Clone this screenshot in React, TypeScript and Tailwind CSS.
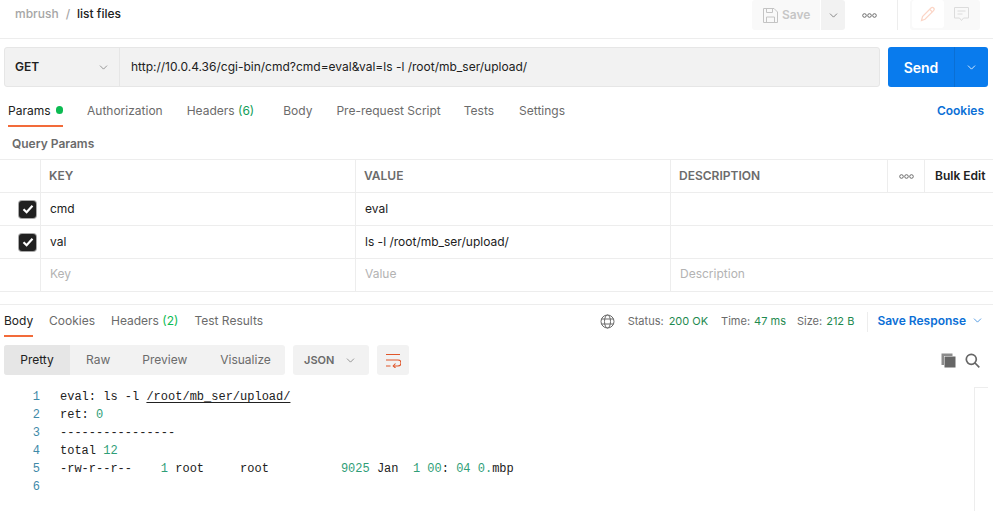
import { ChevronDown } from 'lucide-react';

const inter = "font-['Inter','Noto_Sans',sans-serif]";

function Dots({ className = '' }: { className?: string }) {
  return (
    <svg width="15" height="5" viewBox="0 0 15 5" className={className} fill="none" stroke="#6b6b6b" strokeWidth="1">
      <circle cx="2.5" cy="2.5" r="1.8" />
      <circle cx="7.5" cy="2.5" r="1.8" />
      <circle cx="12.5" cy="2.5" r="1.8" />
    </svg>
  );
}

function Num({ children }: { children: string }) {
  return <span className="text-[#2f9e77]">{children}</span>;
}

function Check() {
  return (
    <div className="flex h-[17px] w-[17px] items-center justify-center rounded-[3px] bg-[#212121] ring-1 ring-[#a8a8a8]">
      <svg width="12" height="10" viewBox="0 0 12 10" fill="none" stroke="#fff" strokeWidth="2.2">
        <path d="M1.5 5.2 4.6 8.2 10.5 1.8" />
      </svg>
    </div>
  );
}

function Row({ k, v, d, muted, check }: { k: string; v: string; d?: string; muted?: boolean; check?: boolean }) {
  const text = muted ? 'pb-[2px] text-[#b3b3b3]' : 'text-[#212121]';
  return (
    <div className="flex h-[33px] border-b border-[#ededed] text-[12px]">
      <div className="flex w-[41px] shrink-0 items-center justify-end border-r border-[#ededed] pr-[4px]">
        {check && <Check />}
      </div>
      <div className={`flex w-[315px] shrink-0 items-center border-r border-[#ededed] pl-[9px] ${text}`}>{k}</div>
      <div className={`flex w-[315px] shrink-0 items-center border-r border-[#ededed] pl-[9px] ${text}`}>{v}</div>
      <div className={`flex flex-1 items-center pl-[9px] ${text}`}>{d}</div>
    </div>
  );
}

const codeLines = [
  <>
    eval: ls -l <span className="underline underline-offset-2">/root/mb_ser/upload/</span>
  </>,
  <>
    ret: <Num>0</Num>
  </>,
  <>----------------</>,
  <>
    total <Num>12</Num>
  </>,
  <>
    -rw-r--r-- {'   '}
    <Num>1</Num> root{'     '}root{'          '}
    <Num>9025</Num> Jan{'  '}
    <Num>1</Num> <Num>00</Num>: <Num>04</Num> <Num>0.</Num>mbp
  </>,
  <></>,
];

export default function App() {
  return (
    <div className={`h-[511px] w-[993px] overflow-hidden bg-white ${inter}`}>
      {/* Top bar */}
      <div className="flex h-[39px] items-start justify-between border-b border-[#ededed] pl-[15px]">
        <div className="flex h-[28px] items-center text-[12px] font-medium">
          <span className="text-[#a6a6a6]">mbrush</span>
          <span className="ml-[7px] text-[#a6a6a6]">/</span>
          <span className="ml-[7px] text-[#212121]">list files</span>
        </div>
        <div className="flex h-[30px] items-center pr-[13px]">
          <div className="flex h-[30px] w-[68px] items-center gap-[4px] rounded-l-[3px] bg-[#f9f9f9] pl-[11px] text-[12px] font-semibold text-[#c6c6c6]">
            <svg width="15" height="15" viewBox="0 0 15 15" fill="none" stroke="#c4c4c4" strokeWidth="1">
              <path d="M0.5 0.5h10.5l3.5 3.5v10.500H0.500z" />
              <path d="M3.500 0.500v4h6v-4M3.500 14.500v-5.500h8v5.500" />
            </svg>
            Save
          </div>
          <div className="ml-px flex h-[30px] w-[24px] items-center justify-center rounded-r-[3px] bg-[#f2f2f2]">
            <ChevronDown size={13} strokeWidth={1.25} color="#555" />
          </div>
          <Dots className="ml-[17px]" />
          <div className="ml-[20px] h-[30px] w-px bg-[#ededed]" />
          <div className="ml-[12px] flex h-[30px] w-[70px] rounded-[3px] bg-[#f9f9f9] pl-[2px]">
            <div className="flex h-[28px] w-[32px] items-center justify-center rounded-[3px] bg-white">
              <svg width="16" height="16" viewBox="0 0 16 16" fill="none" stroke="#fbd5c6" strokeWidth="1.2">
                <path d="M1.500 14.500 2.500 10.500 11 2a1.600 1.600 0 0 1 2.600 2.600L5 13.200z" />
                <path d="M9.800 3.400 12.400 6" />
              </svg>
            </div>
            <div className="flex h-[28px] w-[34px] items-center justify-center">
              <svg width="15" height="15" viewBox="0 0 15 15" fill="none" stroke="#dcdcdc" strokeWidth="1">
                <path d="M0.500 0.500h14v10.500H9.500L7.500 13.500 5.500 11H0.500z" />
                <path d="M3.500 4h8M3.500 7h5" />
              </svg>
            </div>
          </div>
        </div>
      </div>

      {/* Url row */}
      <div className="mt-[8px] flex h-[40px] pl-[4px] pr-[5px] text-[12px]">
        <div className="flex w-[876px] rounded-[3px] border border-[#e6e6e6] bg-[#f2f2f2]">
          <div className="flex w-[115px] items-center justify-between border-r border-[#e6e6e6] pl-[10px] pr-[9px] font-semibold text-[#212121]">
            GET
            <ChevronDown size={13} strokeWidth={1.25} color="#6b6b6b" />
          </div>
          <div className="flex flex-1 items-center pl-[11px] text-[#212121]">
            http://10.0.4.36/cgi-bin/cmd?cmd=eval&amp;val=ls -l /root/mb_ser/upload/
          </div>
        </div>
        <div className="ml-[8px] flex flex-1 rounded-[3px] bg-[#097bed] text-white">
          <div className="flex w-[67px] items-center justify-center border-r border-[#0a6fd4] text-[14px] font-semibold">Send</div>
          <div className="flex flex-1 items-center justify-center">
            <ChevronDown size={13} strokeWidth={1.5} color="#fff" />
          </div>
        </div>
      </div>

      {/* Request tabs */}
      <div className="mt-[15px] flex h-[25px] items-start justify-between pl-[8px] pr-[9px] text-[12px] text-[#6b6b6b]">
        <div className="flex">
          <div className="flex h-[25px] w-[55px] items-start gap-[5px] border-b-2 border-[#f26b3a] text-[#212121]">
            Params
            <span className="mt-[4px] h-[8px] w-[8px] rounded-full bg-[#0cbb52]" />
          </div>
          <span className="ml-[24px]">Authorization</span>
          <span className="ml-[24px]">
            Headers <span className="text-[#0f9d58]">(6)</span>
          </span>
          <span className="ml-[29px]">Body</span>
          <span className="ml-[24px]">Pre-request Script</span>
          <span className="ml-[23px]">Tests</span>
          <span className="ml-[25px]">Settings</span>
        </div>
        <span className="font-semibold text-[#0b6fd6]">Cookies</span>
      </div>

      <div className="flex h-[32px] items-center pl-[12px] pt-[2px] text-[12px] font-semibold text-[#6b6b6b]">Query Params</div>

      {/* Params table */}
      <div className="border-t border-[#ededed]">
        <div className="flex h-[33px] border-b border-[#ededed] text-[12px] font-semibold text-[#6b6b6b]">
          <div className="w-[41px] shrink-0 border-r border-[#ededed]" />
          <div className="flex w-[315px] shrink-0 items-center border-r border-[#ededed] pl-[8px]">KEY</div>
          <div className="flex w-[315px] shrink-0 items-center border-r border-[#ededed] pl-[8px]">VALUE</div>
          <div className="flex w-[217px] shrink-0 items-center border-r border-[#ededed] pl-[8px]">DESCRIPTION</div>
          <div className="flex w-[37px] shrink-0 items-center justify-center border-r border-[#ededed]">
            <Dots />
          </div>
          <div className="flex flex-1 items-center pl-[10px] text-[#212121]">Bulk Edit</div>
        </div>
        <Row k="cmd" v="eval" check />
        <Row k="val" v="ls -l /root/mb_ser/upload/" check />
        <Row k="Key" v="Value" d="Description" muted />
      </div>

      {/* Response */}
      <div className="mt-[12px] border-t border-[#ededed]">
        <div className="flex h-[33px] items-start justify-between pl-[4px] pr-[9px] pt-[7px] text-[12px] text-[#6b6b6b]">
          <div className="flex">
            <div className="h-[25px] w-[29px] border-b-2 border-[#f26b3a] text-[#212121]">Body</div>
            <span className="ml-[16px]">Cookies</span>
            <span className="ml-[16px]">
              Headers <span className="text-[#0cbb52]">(2)</span>
            </span>
            <span className="ml-[16px]">Test Results</span>
          </div>
          <div className="flex items-start text-[11px]">
            <svg width="15" height="15" viewBox="0 0 15 15" fill="none" stroke="#6b6b6b" strokeWidth="1" className="mt-[2px]">
              <circle cx="7.5" cy="7.5" r="6.5" />
              <ellipse cx="7.5" cy="7.5" rx="3" ry="6.5" />
              <path d="M1.3 5h12.4M1.3 10h12.4" />
            </svg>
            <span className="ml-[13px] mt-px leading-[17px]">Status:</span>
            <span className="ml-[5px] mt-px leading-[17px] text-[#1f8a50]">200 OK</span>
            <span className="ml-[13px] mt-px leading-[17px]">Time:</span>
            <span className="ml-[4px] mt-px leading-[17px] text-[#1f8a50]">47 ms</span>
            <span className="ml-[11px] mt-px leading-[17px]">Size:</span>
            <span className="ml-[4px] mt-px leading-[17px] text-[#1f8a50]">212 B</span>
            <div className="ml-[13px] h-[20px] w-px bg-[#ededed]" />
            <span className="ml-[9px] text-[12px] font-semibold text-[#0b6fd6]">Save Response</span>
            <ChevronDown size={13} strokeWidth={1.25} color="#0b6fd6" className="ml-[5px] mt-[2px]" />
          </div>
        </div>

        {/* Response toolbar */}
        <div className="mt-[7px] flex h-[30px] items-center pl-[4px] pr-[13px] text-[12px] text-[#6b6b6b]">
          <div className="flex h-[30px] w-[281px] rounded-[3px] bg-[#f2f2f2]">
            <div className="flex w-[66px] items-center justify-center rounded-l-[3px] bg-[#e6e6e6] text-[#212121]">Pretty</div>
            <span className="ml-[16px] self-center">Raw</span>
            <span className="ml-[32px] self-center">Preview</span>
            <span className="ml-[33px] self-center">Visualize</span>
          </div>
          <div className="ml-[8px] flex h-[30px] w-[76px] items-center justify-between rounded-[3px] bg-[#f2f2f2] pl-[11px] pr-[12px] text-[11px] font-semibold">
            JSON
            <ChevronDown size={13} strokeWidth={1.25} color="#6b6b6b" />
          </div>
          <div className="ml-[8px] flex h-[30px] w-[32px] items-center justify-center rounded-[3px] bg-[#f2f2f2]">
            <svg width="16" height="15" viewBox="0 0 16 15" fill="none" stroke="#e0562a" strokeWidth="1.1">
              <path d="M1 1.500h14M1 7h12a2.500 2.500 0 0 1 0 6H8.500M1 13h4.500" />
              <path d="M10.500 10.500 8.200 13l2.300 2" />
            </svg>
          </div>
          <div className="ml-auto flex items-center gap-[9px]">
            <svg width="15" height="15" viewBox="0 0 15 15">
              <path d="M0.500 0.500h11v2.500H3v9H0.500z" fill="#8c8c8c" />
              <rect x="3.500" y="3.500" width="11" height="11" fill="#666" />
            </svg>
            <svg width="15" height="15" viewBox="0 0 15 15" fill="none" stroke="#666" strokeWidth="1.7">
              <circle cx="6.300" cy="6.300" r="5" />
              <path d="M10 10l4.300 4.300" />
            </svg>
          </div>
        </div>

        {/* Response body */}
        <div className="mt-[12px] flex h-[130px] font-['Liberation_Mono',monospace] text-[12px] leading-[18px] text-[#212121]">
          <div className="w-[40px] shrink-0 pt-[1px] text-right text-[#3f8aa8]">
            {codeLines.map((_, i) => (
              <div key={i} className="h-[18px]">
                {i + 1}
              </div>
            ))}
          </div>
          <div className="w-[934px] shrink-0 pl-[20px] pt-[1px] whitespace-pre">
            {codeLines.map((line, i) => (
              <div key={i} className="h-[18px]">
                {line}
              </div>
            ))}
          </div>
          <div className="h-full w-[14px] border-l border-t border-[#ededed]" />
        </div>
      </div>
    </div>
  );
}
